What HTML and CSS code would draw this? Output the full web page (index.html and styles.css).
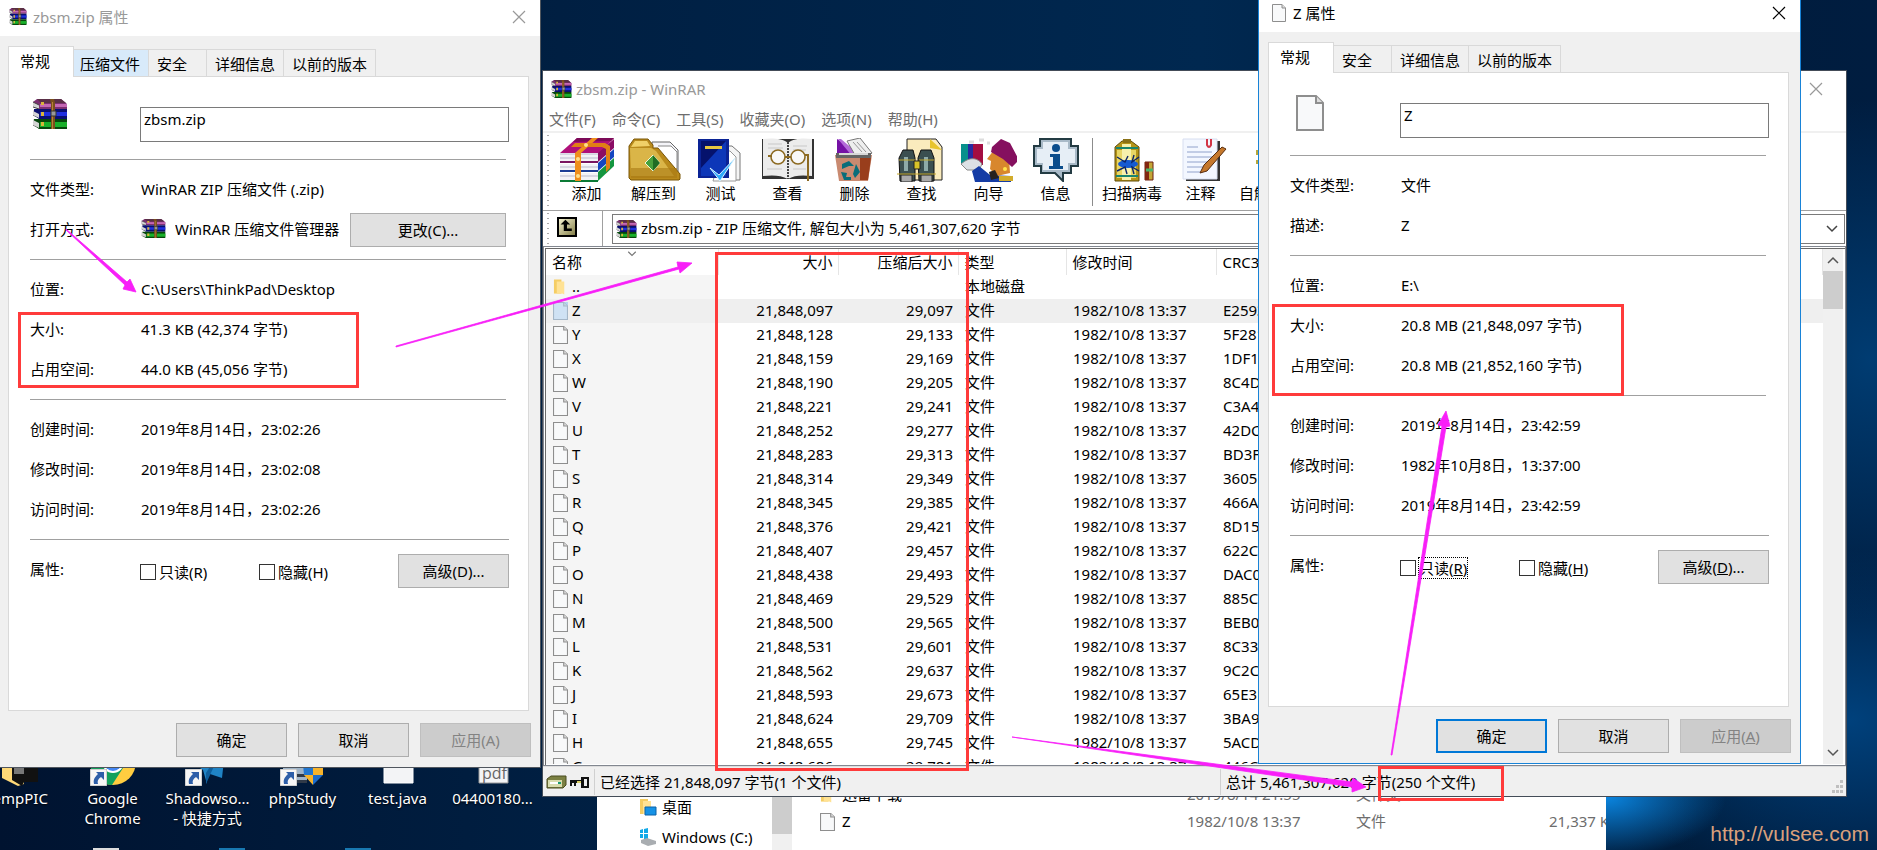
FILE: index.html
```html
<!DOCTYPE html>
<html lang="zh-CN">
<head>
    <meta charset="UTF-8">
    <meta name="viewport" content="width=device-width, initial-scale=1.0">
    <title>zbsm.zip</title>
    <link rel="stylesheet" href="styles.css">
</head>
<body>

<!-- Shared icons -->
<svg class="sprite" aria-hidden="true">
    <symbol id="rar" viewBox="0 0 36 30" preserveAspectRatio="none">
        <path d="M1 3 5 0h24l6 5v5H6L1 7z" fill="#7c2f72"/>
        <path d="M5 0h24l5 4H9z" fill="#5a2f46"/>
        <path d="M8 5h27v3H8z" fill="#c468b4"/>
        <path d="M1 3l6 3v4l-6-2zM1 11l6 3v5l-6-3zM1 20l6 3v6l-6-3z" fill="#d4d4d4"/>
        <path d="M1 3l6 3M1 8l6 2M1 16l6 3M1 26l6 3" stroke="#444"/>
        <path d="M2 10h33v10H7l-5-4z" fill="#0a1070"/>
        <path d="M8 13h27v4H8z" fill="#2030e0"/>
        <path d="M2 20h33v10H7l-5-4z" fill="#07480c"/>
        <path d="M8 23h27v5H8z" fill="#19b02a"/>
        <path d="M1 12l6 3v4l-6-3zM1 21l6 3v5l-6-3z" fill="#d4d4d4"/>
        <path d="M18 0h4l1 4v26h-4V4z" fill="#7a4f1c"/>
        <path d="M20 3h1v27h-1z" fill="#b58338"/>
        <path d="M19 12h5v5h-5z" fill="#999" stroke="#333"/>
        <path d="M9 3h3v3H9zM9 13h3v4H9zM9 23h3v4H9z" fill="#d8b53a"/>
    </symbol>
    <symbol id="page" viewBox="0 0 28 36" preserveAspectRatio="none">
        <path class="sheet" d="M1 1h19l7 7v27H1z" stroke="#8e8e8e" stroke-width="2"/>
        <path d="M20 1v7h7" fill="#ddd" stroke="#8e8e8e" stroke-width="2"/>
    </symbol>
    <symbol id="folder" viewBox="0 0 16 18">
        <path d="M1 1h8v15H1z" fill="#f5cd63"/>
        <path d="M4 3h8v14l-2-1H4z" fill="#ffe294"/>
    </symbol>
    <symbol id="close" viewBox="0 0 14 14">
        <path d="M1 1l12 12M13 1L1 13" stroke="currentColor" stroke-width="1.2"/>
    </symbol>
    <symbol id="chevron" viewBox="0 0 12 8">
        <path d="M1 1l5 5 5-5" fill="none" stroke="currentColor" stroke-width="1.5"/>
    </symbol>
    <symbol id="shortcut" viewBox="0 0 17 17">
        <path d="M0 0h17v17H0z" fill="#f6f6f6" stroke="#aaa"/>
        <path d="M6 3h8v8l-3-3c-3 2-4 4-3 7H4c-1-5 1-7 4-10z" fill="#2d5ea8"/>
    </symbol>
</svg>

<!-- Desktop shortcuts -->
<ul class="desktop-icons">
    <li>
        <svg viewBox="0 0 48 48"><path d="M8 8h22v38l-6 2-16-8z" fill="#ffd978"/><path d="M18 8h26v36H30l-2 4-10-6z" fill="#111"/><path d="M20 30h10v6H20z" fill="#777"/></svg>
        <span>tempPIC</span>
    </li>
    <li>
        <svg viewBox="0 0 48 48"><circle cx="24" cy="24" r="23" fill="#ffcd40"/><path d="M4 13a23 23 0 0 0 19 34l11-17-10-6-9 6z" fill="#12a05c"/><circle cx="24" cy="24" r="11" fill="#fff"/><circle cx="24" cy="24" r="9" fill="#4587f4"/><use href="#shortcut" x="1" y="31" width="17" height="17"/></svg>
        <span>Google Chrome</span>
    </li>
    <li>
        <svg viewBox="0 0 48 48"><path d="M4 22 42 4l-4 36-15-5v11l-4-14z" fill="#1f83c5"/><path d="M40 6 22 35v11z" fill="#0e5e9c"/><use href="#shortcut" x="1" y="31" width="17" height="17"/></svg>
        <span>Shadowso... - 快捷方式</span>
    </li>
    <li>
        <svg viewBox="0 0 48 48"><path d="M4 10h24v35H4z" fill="#9fb4c8"/><path d="M10 36h18v3H10zM12 42h16v3H12z" fill="#303a48"/><path d="M24 26h10v11h-9z" fill="#2277d0"/><path d="M34 26h10v11H34zM25 37h9v10z" fill="#f7b32b"/><path d="M34 37h10l-10 10z" fill="#1b6ccc"/><use href="#shortcut" x="1" y="31" width="17" height="17"/></svg>
        <span>phpStudy</span>
    </li>
    <li>
        <svg viewBox="0 0 48 48"><path d="M10 4h29v41H10z" fill="#f3f4f6" stroke="#fff"/></svg>
        <span>test.java</span>
    </li>
    <li>
        <svg viewBox="0 0 48 48"><path d="M10 4h29v41H10z" fill="#f3f4f6" stroke="#999"/><text x="13" y="41" class="pdf-text">pdf</text></svg>
        <span>04400180...</span>
    </li>
</ul>
<div class="next-row"><i class="light"></i><i></i><i></i></div>

<p class="watermark">http://vulsee.com</p>

<!-- Explorer window at the back -->
<section class="explorer">
    <ul class="tree">
        <li><svg viewBox="0 0 18 18"><use href="#folder" x="0" y="0" width="16" height="18"/><path d="M6 9h11v8H6z" fill="#1592e6" stroke="#0c62a8"/></svg>桌面</li>
        <li><svg viewBox="0 0 18 18"><path d="M1 2l3-1v4H1zM5 1l4-1v5H5zM1 6h3v4H1zM5 6h4v5H5z" fill="#12a9e8"/><path d="M2 12l6-2 9 3v3l-8 2-7-3z" fill="#a9adb1"/></svg>Windows (C:)</li>
    </ul>
    <div class="explorer-scroll"></div>
    <table class="explorer-files">
        <tr><td><svg class="file-icon"><use href="#folder"/></svg>迅雷下载</td><td>2019/8/14 21:55</td><td>文件夹</td><td></td></tr>
        <tr><td><svg class="file-icon"><use href="#page"/></svg>Z</td><td>1982/10/8 13:37</td><td>文件</td><td>21,337 KB</td></tr>
    </table>
</section>

<!-- WinRAR window -->
<section class="winrar">
    <header class="winrar-title">
        <svg class="title-icon"><use href="#rar"/></svg>
        <span>zbsm.zip - WinRAR</span>
        <button class="close-btn" aria-label="关闭"><svg><use href="#close"/></svg></button>
    </header>
    <nav class="menu">
        <button>文件(F)</button><button>命令(C)</button><button>工具(S)</button><button>收藏夹(O)</button><button>选项(N)</button><button>帮助(H)</button>
    </nav>
    <div class="toolbar">
        <button>
            <svg viewBox="0 0 56 44"><path d="M1 15 18 0h37L41 15z" fill="#b0107a"/><path d="M14 4 18 0h37l-3 3z" fill="#7c0a58"/><path d="M1 16h38v9H1zM1 26h38v8H1zM1 35h38v8H1z" fill="#f2f2f6"/><path d="M1 16h38M1 20h38M1 29h38M1 38h38" stroke="#b9b9cc"/><path d="M1 24h38" stroke="#7a1460" stroke-width="2"/><path d="M1 33h38" stroke="#1b3d95" stroke-width="2"/><path d="M1 43h38" stroke="#0c7a35" stroke-width="2"/><path d="M39 15 55 1v9L39 24z" fill="#8a0d64"/><path d="M39 25 55 11v8L39 33z" fill="#1546c0"/><path d="M39 34 55 20v8L39 43z" fill="#14963f"/><path d="M16 15h6v28h-6zM16 15 33 0h6L22 15z" fill="#ef8e1c"/><path d="M16 5h30l5 3v22l-4 4V11l-4-2H12z" fill="#e07f15"/><circle cx="19" cy="21" r="2" fill="#ffe08a"/><circle cx="19" cy="38" r="2" fill="#ffe08a"/><circle cx="27" cy="7" r="2" fill="#ffe08a"/></svg>
            <span>添加</span>
        </button>
        <button>
            <svg viewBox="0 0 56 44"><path d="M26 4h18l8 8v28H26z" fill="#f4f4f8" stroke="#666"/><path d="M32 8h13l6 6v20" fill="#fff" stroke="#888"/><path d="M3 8 8 1h14l5 6v3h5l22 26v5l-1 1H5l-2-2z" fill="#b98a1c" stroke="#7b5607"/><path d="M4 10h21l5 3 18 25H5z" fill="#dab548"/><path d="M5 9 9 3h12l3 5z" fill="#f0d068"/><path d="M5 30h46v10H5z" fill="#a87a14" opacity=".6"/><path d="M19 25l8-8 7 8-7 8z" fill="#47a13c" stroke="#f3f7d8"/><path d="M27 17v16l7-8z" fill="#1f6d24"/></svg>
            <span>解压到</span>
        </button>
        <button>
            <svg viewBox="0 0 56 44"><path d="M31 8h8l8 7v27H21V8z" fill="#f5f5f5" stroke="#777"/><path d="M29 13h8l6 6v24H20z" fill="#fff" stroke="#999"/><path d="M5 1h31v39H5z" fill="#0a2395"/><path d="M8 3h25v35H8z" fill="#0d37b8"/><path d="M8 3h25L8 30z" fill="#05126c"/><path d="M12 8h17v3H12z" fill="#e6c742"/><path d="M17 30l9 7 16-17-15 23z" fill="#2faafa" stroke="#d9f3ff"/></svg>
            <span>测试</span>
        </button>
        <button>
            <svg viewBox="0 0 56 44"><path d="M2 1h52v40H2z" fill="#333"/><path d="M3 1c8-1 19-1 25 4 6-5 16-5 24-4v37c-9-1-18-1-24 3-7-4-16-4-25-3z" fill="#ececec"/><path d="M8 6h14M8 10h15M33 8h14M33 12h13M7 31h15M33 31h13" stroke="#c8c8c8"/><path d="M28 4v37" stroke="#444" stroke-width="2" stroke-dasharray="2 1"/><circle cx="18" cy="19" r="7" fill="#f8f8f8" stroke="#8c6a22" stroke-width="1.6"/><circle cx="38" cy="19" r="7" fill="#f8f8f8" stroke="#8c6a22" stroke-width="1.6"/><path d="M25 19h6M45 17h3v26M8 18h4" fill="none" stroke="#8c6a22" stroke-width="2"/></svg>
            <span>查看</span>
        </button>
        <button>
            <svg viewBox="0 0 56 44"><path d="M10 1 38 18H10z" fill="#7511a5"/><path d="M11 1h3l20 17h-9z" fill="#b36bd8"/><path d="M20 3l13-3 12 15-5 4-12-2z" fill="#eee" stroke="#777"/><path d="M26 4l9 10M30 4l9 10" stroke="#999"/><path d="M8 17h37l-4 26H12z" fill="#c98a70"/><path d="M33 20h11l-3 22h-8z" fill="#993e1c"/><path d="M9 15h35v5H9z" fill="#656565"/><path d="M12 16h29" stroke="#d8d8d8" stroke-width="2"/><path d="M15 31v-5l7-3 5 5h-5zM29 26l4 8-5 6-2-4zM14 34l6 1-1 4h5v3h-7z" fill="#086d7a"/></svg>
            <span>删除</span>
        </button>
        <button>
            <svg viewBox="0 0 56 44"><path d="M13 1h29l6 8v33H13z" fill="#faebbd" stroke="#222"/><path d="M36 1l12 11-12-2z" fill="#e8c42b"/><path d="M5 20l4-8h10l2 8v23H6zM24 20l3-8h10l3 8v23H25z" fill="#3b4f50" stroke="#111"/><path d="M7 37h11v7H7zM27 37h11v7H27z" fill="#aaa" stroke="#222"/><path d="M10 19h4v14h-4zM30 19h4v14h-4z" fill="#8eaaa8"/><path d="M3 36h20M23 36h19M5 22h16M25 22h15" stroke="#c4a72b"/><path d="M20 23h6v8h-6z" fill="#d8c328" stroke="#222"/></svg>
            <span>查找</span>
        </button>
        <button>
            <svg viewBox="0 0 56 44"><path d="M0 6h7v20H0z" fill="#07908c"/><path d="M7 6h7v20H7z" fill="#262aa0"/><path d="M12 6h10v21H12z" fill="#a30d41"/><path d="M0 26c9-8 17-6 21 0l-3 6H6z" fill="#dce1e5" stroke="#888"/><path d="M11 33l7-5 11 9 21 1v6H14z" fill="#153ca5"/><path d="M33 12l15 8 1 15-13 3-7-7 1-8-4-2z" fill="#d8872d"/><path d="M31 9 40 1l9 4 9 17-7 7-9-8-12-7z" fill="#85105f"/><path d="M28 34l6-2 4 8-8 2z" fill="#26221f"/><path d="M38 38h14v5H38z" fill="#d2ac2b"/><circle cx="44" cy="31" r="2" fill="#ffe44b"/><path d="M8 4h5M18 2h5M26 5h3" stroke="#ddd" stroke-width="3"/></svg>
            <span>向导</span>
        </button>
        <button>
            <svg viewBox="0 0 56 44"><path d="M12 1h31v7h7v20h-7v7h-8v8l-8-8H13v-7H6V8h6z" fill="#a9bac8" stroke="#233b43" stroke-width="2"/><path d="M15 4h25v7h7v14h-7v7H15v-7H9V11h6z" fill="#e6eef6"/><circle cx="28" cy="10" r="4" fill="#0b4d8c"/><path d="M22 16h10v12h3v3H21v-3h4v-9h-3z" fill="#0b4d8c"/></svg>
            <span>信息</span>
        </button>
        <hr>
        <button>
            <svg viewBox="0 0 56 44"><path d="M11 9l7-6h9l8 6v34H11z" fill="#b59419" stroke="#5e4a06"/><path d="M13 12h19v28H13z" fill="#e8d665"/><path d="M18 6h9v36h-9z" fill="#f7f1ac"/><path d="M19 1h8v4h-8z" fill="#8a7117"/><path d="M12 10h22M12 38h22" stroke="#19856f" stroke-width="2"/><ellipse cx="24" cy="26" rx="10" ry="4" fill="#155ad2"/><path d="M13 19l8 5 3-6M35 19l-7 5 2-7M13 33l8-4 2 7M35 33l-7-4 2 7" fill="none" stroke="#0b2568" stroke-width="1.4"/><path d="M41 24h8v18h-8z" fill="#c3a536" stroke="#6c200f"/><path d="M41 24h4v18h-4z" fill="#822711"/><path d="M42 32h7" stroke="#49b36b" stroke-width="3"/></svg>
            <span>扫描病毒</span>
        </button>
        <button>
            <svg viewBox="0 0 56 44"><path d="M13 3h34v40H13z" fill="#333"/><path d="M10 1h34v40H10z" fill="#f3f7ff" stroke="#d7def0"/><path d="M14 9h11M14 14h25M14 19h26M14 24h22M14 29h20M14 34h15" stroke="#91a2cb"/><path d="M34 1v6q2 4 4 0V1" fill="none" stroke="#d23647" stroke-width="2"/><path d="M27 35l4-8L49 9l4 2-19 22z" fill="#c5782c" stroke="#582d0e"/></svg>
            <span>注释</span>
        </button>
        <button>
            <svg viewBox="0 0 56 44"><path d="M17 12h5v5h-5zM17 22h7v4h-7z" fill="#b9a73b"/></svg>
            <span>自解压格式</span>
        </button>
    </div>
    <div class="address-row">
        <div class="up-cell">
            <button class="up-btn" aria-label="向上"><svg viewBox="0 0 20 20"><path d="M8 1l6 6h-4v5h6v3H6V7H2z" fill="#000"/></svg></button>
        </div>
        <div class="address">
            <svg class="title-icon"><use href="#rar"/></svg>
            <select aria-label="路径"><option>zbsm.zip - ZIP 压缩文件, 解包大小为 5,461,307,620 字节</option></select>
            <svg class="drop"><use href="#chevron"/></svg>
        </div>
    </div>
    <div class="list">
        <div class="list-scroll">
            <table class="files">
                <colgroup><col class="c-name"><col class="c-size"><col class="c-size"><col class="c-type"><col class="c-date"><col></colgroup>
                <thead>
                    <tr><th>名称<svg class="sort"><use href="#chevron"/></svg></th><th>大小</th><th>压缩后大小</th><th>类型</th><th>修改时间</th><th>CRC32</th></tr>
                </thead>
                <tbody id="fileRows">
                    <tr><td><svg class="file-icon"><use href="#folder"/></svg>..</td><td></td><td></td><td>本地磁盘</td><td></td><td></td></tr>
                </tbody>
            </table>
        </div>
        <div class="scrollbar">
            <svg class="arrow-up"><use href="#chevron"/></svg>
            <div class="thumb"></div>
            <svg class="arrow-down"><use href="#chevron"/></svg>
        </div>
    </div>
    <footer class="status">
        <div class="status-icons">
            <svg viewBox="0 0 44 18"><path d="M1 6l4-3h15v9l-3 3H1z" fill="#7b8042" stroke="#4a4d20"/><path d="M2 7h14v7H2z" fill="#d8dcae"/><path d="M4 9h11v2H4z" fill="#fff"/><path d="M12 9h3v2h-3z" fill="#1a9a70"/><path d="M24 7h12v3H24zM24 9h2v4h-2zM28 9h2v4h-2zM35 4h8v11h-8z" fill="#111"/><path d="M38 6h3v7h-3z" fill="#eee"/><path d="M31 8h4v2h-4z" fill="#d8cf62"/></svg>
        </div>
        <div class="status-text">已经选择 21,848,097 字节(1 个文件)</div>
        <div class="status-text">总计 5,461,307,620 字节(250 个文件)</div>
        <svg class="grip" viewBox="0 0 12 14"><path d="M8 0h3v3H8zM4 5h3v3H4zM8 5h3v3H8zM0 10h3v3H0zM4 10h3v3H4zM8 10h3v3H8z" fill="#bfbfbf"/></svg>
    </footer>
</section>

<!-- zbsm.zip properties -->
<section class="dialog dialog-zip">
    <header class="dialog-title">
        <svg class="dialog-icon"><use href="#rar"/></svg>
        <span>zbsm.zip 属性</span>
        <button class="close-btn" aria-label="关闭"><svg><use href="#close"/></svg></button>
    </header>
    <div class="tabs">
        <button class="active">常规</button><button class="hover">压缩文件</button><button>安全</button><button>详细信息</button><button>以前的版本</button>
    </div>
    <div class="panel">
        <div class="name-row">
            <svg class="big-rar"><use href="#rar"/></svg>
            <input type="text" value="zbsm.zip" aria-label="文件名">
        </div>
        <dl>
            <div><dt>文件类型:</dt><dd>WinRAR ZIP 压缩文件 (.zip)</dd></div>
            <div><dt>打开方式:</dt><dd class="open-with"><svg><use href="#rar"/></svg><span>WinRAR 压缩文件管理器</span><button class="btn">更改(C)...</button></dd></div>
        </dl>
        <dl>
            <div><dt>位置:</dt><dd>C:\Users\ThinkPad\Desktop</dd></div>
            <div><dt>大小:</dt><dd>41.3 KB (42,374 字节)</dd></div>
            <div><dt>占用空间:</dt><dd>44.0 KB (45,056 字节)</dd></div>
        </dl>
        <dl>
            <div><dt>创建时间:</dt><dd>2019年8月14日，23:02:26</dd></div>
            <div><dt>修改时间:</dt><dd>2019年8月14日，23:02:08</dd></div>
            <div><dt>访问时间:</dt><dd>2019年8月14日，23:02:26</dd></div>
        </dl>
        <div class="attributes">
            <span>属性:</span>
            <label><input type="checkbox"><span>只读(R)</span></label>
            <label><input type="checkbox"><span>隐藏(H)</span></label>
            <button class="btn">高级(D)...</button>
        </div>
    </div>
    <div class="actions">
        <button class="btn">确定</button><button class="btn">取消</button><button class="btn" disabled>应用(A)</button>
    </div>
</section>

<!-- Z properties -->
<section class="dialog dialog-z">
    <header class="dialog-title">
        <svg class="dialog-icon page-icon"><use href="#page"/></svg>
        <span>Z 属性</span>
        <button class="close-btn" aria-label="关闭"><svg><use href="#close"/></svg></button>
    </header>
    <div class="tabs">
        <button class="active">常规</button><button>安全</button><button>详细信息</button><button>以前的版本</button>
    </div>
    <div class="panel">
        <div class="name-row">
            <svg class="big-page"><use href="#page"/></svg>
            <input type="text" value="Z" aria-label="文件名">
        </div>
        <dl>
            <div><dt>文件类型:</dt><dd>文件</dd></div>
            <div><dt>描述:</dt><dd>Z</dd></div>
        </dl>
        <dl>
            <div><dt>位置:</dt><dd>E:\</dd></div>
            <div><dt>大小:</dt><dd>20.8 MB (21,848,097 字节)</dd></div>
            <div><dt>占用空间:</dt><dd>20.8 MB (21,852,160 字节)</dd></div>
        </dl>
        <dl>
            <div><dt>创建时间:</dt><dd>2019年8月14日，23:42:59</dd></div>
            <div><dt>修改时间:</dt><dd>1982年10月8日，13:37:00</dd></div>
            <div><dt>访问时间:</dt><dd>2019年8月14日，23:42:59</dd></div>
        </dl>
        <div class="attributes">
            <span>属性:</span>
            <label><input type="checkbox"><span class="focused">只读(<u>R</u>)</span></label>
            <label><input type="checkbox"><span>隐藏(<u>H</u>)</span></label>
            <button class="btn">高级(<u>D</u>)...</button>
        </div>
    </div>
    <div class="actions">
        <button class="btn default">确定</button><button class="btn">取消</button><button class="btn" disabled>应用(<u>A</u>)</button>
    </div>
</section>

<!-- Red boxes and arrows -->
<svg class="marks" aria-hidden="true">
    <g fill="none" stroke="#ff3b3b" stroke-width="3">
        <rect x="19.5" y="313.5" width="338" height="73"/>
        <rect x="716.5" y="253.5" width="251" height="516"/>
        <rect x="1273.5" y="305.5" width="349" height="89"/>
        <rect x="1379.5" y="767.5" width="123" height="32"/>
    </g>
    <g fill="#f81ff8" stroke="#f81ff8" stroke-width="0.8">
        <path d="M66 229l61 53 3-3 6 13-13-3 2-4-59-55z"/>
        <path d="M396 346l282-79-1-5 15 1-12 10-1-4-283 78z"/>
        <path d="M1012 737l340 45 1-4 13 9-14 5v-5z"/>
        <path d="M1391 755l51-329-4-1 8-14 4 15-4 1-54 328z"/>
    </g>
</svg>

<script>
    var crc = ["E2593C41", "5F28101B", "1DF17E20", "8C4D91B6", "C3A40D72", "42DC5518", "BD3F6A09", "3605EC84", "466AF1D3", "8D152B90",
        "622C7D15", "DAC0413E", "885C09A7", "BEB0D264", "8C33B80F", "9C2C1E58", "65E3F746", "3BA9206C", "5ACD8E31", "446C5B9A"];
    var rows = "";

    crc.forEach(function(value, i) {
        rows += "<tr" + (i === 0 ? " class='selected'" : "") + ">";
        rows += "<td><svg class='file-icon'><use href='#page'/></svg>" + String.fromCharCode(90 - i) + "</td>";
        rows += "<td>" + (21848097 + i * 31).toLocaleString("en-US") + "</td>";
        rows += "<td>" + (29097 + i * 36).toLocaleString("en-US") + "</td>";
        rows += "<td>文件</td><td>1982/10/8 13:37</td><td>" + value + "</td></tr>";
    });

    document.getElementById("fileRows").insertAdjacentHTML("beforeend", rows);
</script>

</body>
</html>
```

FILE: styles.css
```css
* {
    box-sizing: border-box;
}

body {
    margin: 0;
    height: 100vh;
    position: relative;
    overflow: hidden;
    font-family: "Noto Sans", "Noto Sans CJK SC", sans-serif;
    font-size: 15px;
    line-height: 20px;
    color: #000;
    background:
        radial-gradient(ellipse 120px 60px at 1606px 797px, #0a85e0, rgba(0, 80, 160, 0) 100%),
        radial-gradient(ellipse 220px 260px at 1870px 360px, #003c72, rgba(0, 50, 100, 0)),
        radial-gradient(ellipse 260px 170px at 1850px 720px, #00417c, rgba(0, 50, 100, 0)),
        linear-gradient(90deg, #001330 0, #001f42 560px, #002850 1200px, #001c3c 1700px, #001d40 100%);
}

button, input, select {
    font: inherit;
    color: inherit;
    padding: 0;
    border: 0;
    background: none;
}

ul, dl, dd {
    margin: 0;
    padding: 0;
    list-style: none;
}

.sprite {
    position: absolute;
    width: 0;
    height: 0;
}

.sheet {
    fill: #f8f9fa;
}

/* desktop */
.desktop-icons {
    position: absolute;
    left: -30px;
    top: 738px;
    display: grid;
    grid-template-columns: repeat(6, 95px);
    color: #fff;
    text-align: center;
}

.desktop-icons li {
    padding: 0 4px;
    text-shadow: 0 1px 2px #000;
}

.desktop-icons svg {
    display: block;
    width: 48px;
    height: 48px;
    margin: 0 auto 2px;
}

.desktop-icons span {
    display: block;
}

.pdf-text {
    font: 16px "Open Sans", sans-serif;
    fill: #666;
    text-shadow: none;
}

.next-row {
    position: absolute;
    left: 93px;
    bottom: 0;
    display: flex;
    gap: 100px;
}

.next-row i {
    width: 26px;
    height: 2px;
    background: #1878b0;
}

.next-row .light {
    background: #ddd;
}

.watermark {
    position: absolute;
    right: 8px;
    bottom: 4px;
    margin: 0;
    font: 21px/24px "Liberation Sans", sans-serif;
    color: #d9a07c;
}

/* explorer */
.explorer {
    position: absolute;
    left: 597px;
    top: 780px;
    bottom: 0;
    width: 1009px;
    display: flex;
    overflow: hidden;
    background: #fff;
}

.tree {
    flex: none;
    width: 175px;
    padding: 12px 0 0 42px;
}

.tree li {
    display: flex;
    align-items: center;
    gap: 5px;
    height: 30px;
}

.tree svg {
    width: 18px;
    height: 18px;
}

.explorer-scroll {
    flex: none;
    width: 20px;
    background: linear-gradient(#cdcdcd 54px, #f0f0f0 54px);
}

.explorer-files {
    flex: none;
    width: 900px;
    table-layout: fixed;
    border-collapse: collapse;
    margin-left: 28px;
    align-self: flex-start;
    color: #6d6d6d;
}

.explorer-files td {
    height: 27px;
    padding: 1px 0 0;
    white-space: nowrap;
}

.explorer-files td:first-child {
    width: 367px;
    color: #000;
}

.explorer-files td:nth-child(2) {
    width: 169px;
}

.explorer-files td:nth-child(3) {
    width: 193px;
}

.explorer-files .file-icon {
    margin-right: 7px;
}

/* winrar */
.winrar {
    position: absolute;
    left: 542px;
    top: 70px;
    width: 1305px;
    height: 727px;
    display: flex;
    flex-direction: column;
    border: 1px solid #444c58;
    background: #fff;
}

.winrar-title {
    display: flex;
    align-items: center;
    height: 36px;
    padding: 0 23px 0 8px;
    color: #999;
}

.title-icon {
    width: 21px;
    height: 18px;
    margin-right: 4px;
}

.close-btn {
    display: flex;
    margin-left: auto;
}

.close-btn svg {
    width: 14px;
    height: 14px;
}

.menu {
    display: flex;
    gap: 16px;
    height: 26px;
    padding-left: 6px;
    border-bottom: 2px solid #f0f0f0;
    color: #6d6d6d;
}

.toolbar {
    display: flex;
    align-items: flex-start;
    height: 78px;
    padding: 5px 0 0 10px;
    border-bottom: 1px solid #a0a0a0;
    overflow: hidden;
    background: radial-gradient(circle, #aaa 1px, transparent 1px) 3px 0 / 4px 5px repeat-y;
}

.toolbar button {
    flex: none;
    width: 67px;
    white-space: nowrap;
}

.toolbar button:nth-last-child(3) {
    width: 70px;
}

.toolbar button:last-child {
    width: 90px;
    padding-left: 5px;
    text-align: left;
}

.toolbar svg {
    display: block;
    width: 56px;
    height: 44px;
    margin: 0 auto 1px;
}

.toolbar button:last-child svg {
    margin-left: 0;
}

.toolbar hr {
    width: 1px;
    height: 68px;
    margin: 0 4px 0 3px;
    border: 0;
    background: #8c8c8c;
}

.address-row {
    display: flex;
    gap: 1px;
    height: 35px;
    background: radial-gradient(circle, #aaa 1px, transparent 1px) 3px 0 / 4px 5px repeat-y;
}

.up-cell {
    width: 60px;
    border-right: 1px solid #a0a0a0;
}

.up-btn {
    width: 20px;
    height: 20px;
    margin: 6px 0 0 14px;
    border: 2px solid #000;
    background: linear-gradient(135deg, #f5f2cf, #85804a);
}

.up-btn svg {
    display: block;
}

.address {
    position: relative;
    flex: 1;
    display: flex;
    align-items: center;
    height: 30px;
    margin: 3px 1px 0 8px;
    padding-left: 3px;
    border: 1px solid #7a7a7a;
}

.address select {
    flex: 1;
    height: 28px;
    padding-bottom: 2px;
    appearance: none;
}

.drop {
    position: absolute;
    right: 6px;
    width: 12px;
    height: 8px;
    color: #444;
    pointer-events: none;
}

.list {
    flex: 1;
    min-height: 0;
    display: flex;
    border: 1px solid #828790;
    box-shadow: inset 1px 1px 0 #fff, inset 2px 2px 0 #696969;
    padding: 2px 2px 1px;
}

.list-scroll {
    flex: 1;
    overflow: hidden;
}

.files {
    width: 100%;
    table-layout: fixed;
    border-collapse: collapse;
}

.c-name {
    width: 172px;
}

.c-size {
    width: 120px;
}

.c-type {
    width: 108px;
}

.c-date {
    width: 150px;
}

.files th {
    position: relative;
    height: 26px;
    padding: 0 6px;
    font-weight: normal;
    text-align: left;
    border-right: 1px solid #e5e5e5;
}

.files td {
    height: 24px;
    padding: 0 7px 2px;
    white-space: nowrap;
}

.files td:first-child {
    background: #f5f5f5;
}

.files .selected td {
    background: #efefef;
}

.files .selected .file-icon {
    background: #b5d4f0;
}

.selected use {
    opacity: 0.4;
}

.files td:nth-child(2),
.files td:nth-child(3),
.files th:nth-child(2),
.files th:nth-child(3) {
    padding-right: 5px;
    text-align: right;
}

.sort {
    position: absolute;
    left: 81px;
    top: 2px;
    width: 10px;
    height: 6px;
    color: #777;
}

.file-icon {
    width: 15px;
    height: 18px;
    margin-right: 4px;
    vertical-align: -4px;
}

.scrollbar {
    width: 20px;
    display: flex;
    flex-direction: column;
    align-items: center;
    background: #f0f0f0;
    color: #555;
}

.scrollbar svg {
    width: 12px;
    height: 8px;
    margin: 7px 0;
}

.arrow-up {
    transform: rotate(180deg);
}

.thumb {
    width: 20px;
    height: 38px;
    background: #cdcdcd;
}

.scrollbar .arrow-down {
    margin-top: auto;
}

.status {
    position: relative;
    display: flex;
    align-items: center;
    height: 30px;
    border-top: 1px solid #ddd;
    background: #f0f0f0;
}

.status-icons {
    width: 51px;
    padding-left: 3px;
}

.status-icons svg {
    display: block;
    width: 44px;
    height: 18px;
}

.status-text {
    flex: 1;
    height: 26px;
    padding-left: 5px;
    border-left: 1px solid #d0d0d0;
    line-height: 26px;
}

.grip {
    position: absolute;
    right: 2px;
    bottom: 2px;
    width: 12px;
    height: 14px;
}

/* property dialogs */
.dialog {
    position: absolute;
    width: 543px;
    height: 770px;
    display: flex;
    flex-direction: column;
    border: 1px solid #50565e;
    background: #f0f0f0;
}

.dialog-zip {
    left: -2px;
    top: -2px;
}

.dialog-z {
    left: 1258px;
    top: -6px;
    border-color: #1883d7;
}

.dialog-title {
    display: flex;
    align-items: center;
    height: 37px;
    padding: 0 14px 2px 10px;
    background: #fff;
}

.dialog-zip .dialog-title {
    color: #999;
}

.dialog-icon {
    width: 18px;
    height: 17px;
    margin-right: 6px;
}

.page-icon {
    width: 14px;
    height: 18px;
    margin: 0 7px 0 3px;
}

.tabs {
    position: relative;
    z-index: 1;
    display: flex;
    align-items: flex-end;
    height: 41px;
    margin-bottom: -1px;
    padding-left: 9px;
}

.tabs button {
    height: 28px;
    min-width: 58px;
    padding: 1px 8px 0;
    border: 1px solid #d9d9d9;
    border-left: 0;
    text-align: left;
}

.tabs .hover {
    padding: 1px 8px 0 6px;
    background: #d8eafa;
}

.tabs .active {
    height: 31px;
    min-width: 66px;
    padding: 0 0 2px 11px;
    border: 1px solid #d9d9d9;
    border-bottom: 0;
    background: #fff;
}

.panel {
    flex: 1;
    margin: 0 11px 0 9px;
    padding: 0 22px 0 21px;
    border: 1px solid #d9d9d9;
    background: #fff;
}

.name-row {
    display: flex;
    align-items: flex-start;
    height: 82px;
    padding-top: 22px;
    margin-right: -3px;
}

.big-rar {
    width: 36px;
    height: 30px;
    margin: 0 72px 0 2px;
}

.big-page {
    width: 28px;
    height: 36px;
    margin: 0 76px 0 6px;
}

.name-row input {
    flex: 1;
    height: 35px;
    margin-top: 8px;
    padding: 0 3px 11px;
    border: 1px solid #7a7a7a;
}

.panel dl {
    padding: 10px 0 9px;
    border-top: 1px solid #a0a0a0;
}

.panel dl div {
    display: grid;
    grid-template-columns: 111px 1fr;
    align-items: center;
    height: 40px;
    padding-bottom: 3px;
}

.open-with {
    display: flex;
    align-items: center;
}

.open-with svg {
    flex: none;
    width: 25px;
    height: 19px;
    margin-right: 9px;
}

.open-with span {
    flex: 1;
    overflow: hidden;
    white-space: nowrap;
    margin-right: 8px;
}

.btn {
    flex: none;
    height: 34px;
    padding-bottom: 1px;
    border: 1px solid #adadad;
    background: #e1e1e1;
}

.open-with .btn {
    width: 156px;
    margin-top: 3px;
}

.attributes {
    display: grid;
    grid-template-columns: 110px 119px 1fr 111px;
    align-items: center;
    height: 63px;
    margin-right: -3px;
    border-top: 1px solid #a0a0a0;
}

.attributes > span {
    padding-bottom: 5px;
}

.attributes label {
    display: flex;
    align-items: center;
    gap: 3px;
    padding-top: 2px;
}

.attributes input {
    width: 16px;
    height: 16px;
    margin: 0;
    appearance: none;
    border: 1px solid #333;
    background: #fff;
}

.focused {
    outline: 1px dotted #000;
}

.actions {
    display: grid;
    grid-template-columns: repeat(3, 111px);
    gap: 11px;
    justify-content: end;
    padding: 12px 9px 10px 0;
}

.btn.default {
    border: 2px solid #0078d7;
}

.btn:disabled {
    color: #838383;
    background: #ccc;
    border-color: #bfbfbf;
}

/* marks over the windows */
.marks {
    position: absolute;
    left: 0;
    top: 0;
    width: 100%;
    height: 100%;
    pointer-events: none;
}
```
